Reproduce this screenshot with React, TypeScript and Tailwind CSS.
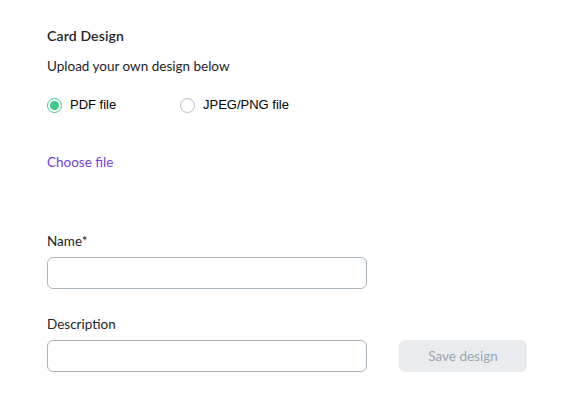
import React from "react";

export default function App() {
  const font = { fontFamily: "Lato, 'Noto Sans', sans-serif" };
  return (
    <div className="w-[577px] h-[417px] bg-white text-[#1d2327]" style={font}>
      <div className="pl-[47px] pt-[27px] flex flex-col">
        <h2 className="text-[14px] tracking-[0.15px] font-semibold leading-[18px]">Card Design</h2>
        <p className="text-[13.5px] leading-[18px] mt-[12px]">Upload your own design below</p>
        <div className="flex items-center mt-[21px] h-[18px] font-['Liberation_Sans',Arial,sans-serif] text-[13px] text-black">
          <label className="flex items-center w-[133px]">
            <span className="w-[15px] h-[15px] rounded-full border-[1.5px] border-[#3cc98a] flex items-center justify-center">
              <span className="w-[9px] h-[9px] rounded-full bg-[#3cc98a]" />
            </span>
            <span className="ml-[8px]">PDF file</span>
          </label>
          <label className="flex items-center">
            <span className="w-[15px] h-[15px] rounded-full border border-[#b9c2c9]" />
            <span className="ml-[8px]">JPEG/PNG file</span>
          </label>
        </div>
        <button className="self-start text-[13.5px] leading-[18px] mt-[39px] text-[#7441e0]">Choose file</button>
        <label className="text-[13.5px] leading-[18px] mt-[61px]">Name*</label>
        <div className="mt-[7px] w-[320px] h-[32px] rounded-[6px] border border-[#aab5bd]" />
        <label className="text-[13.5px] leading-[18px] mt-[26px]">Description</label>
        <div className="mt-[7px] flex items-center gap-[32px]">
          <div className="w-[320px] h-[32px] rounded-[6px] border border-[#aab5bd]" />
          <button className="w-[128px] h-[32px] rounded-[6px] bg-[#e9ecef] text-[#9ba7b2] text-[13.5px]">Save design</button>
        </div>
      </div>
    </div>
  );
}
